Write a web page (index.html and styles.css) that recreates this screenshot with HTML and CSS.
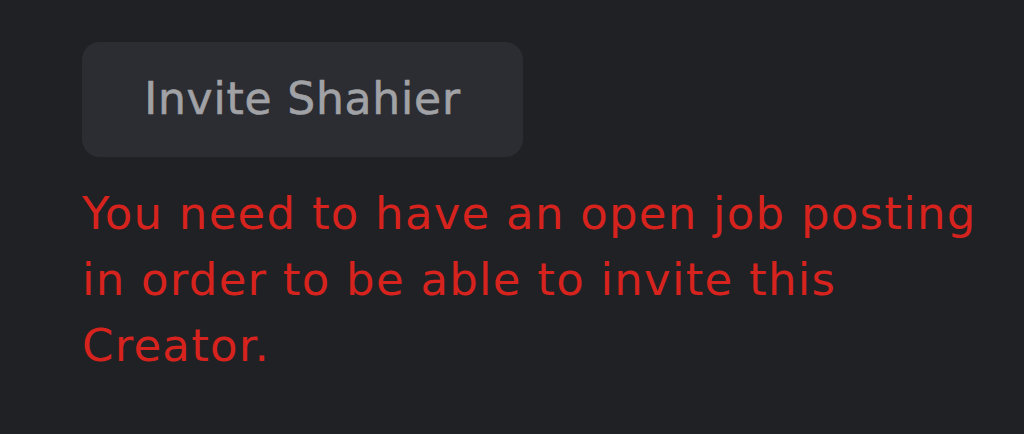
FILE: index.html
```html
<!DOCTYPE html>
<html>
<head>
<meta charset="utf-8">
<link rel="stylesheet" href="styles.css">
</head>
<body>
<div class="panel">
  <button class="invite-btn">Invite Shahier</button>
  <p class="error">You need to have an open job posting in order to be able to invite this Creator.</p>
</div>
</body>
</html>
```
FILE: styles.css
```css
html, body {
  margin: 0;
  padding: 0;
  background: #202125;
  height: 100%;
}
.panel {
  padding: 42px 0 0 82px;
  display: flex;
  flex-direction: column;
  align-items: flex-start;
}
.invite-btn {
  width: 441px;
  height: 115px;
  border: none;
  border-radius: 18px;
  background: #2c2d32;
  color: #a1a2a6;
  font-family: "DejaVu Sans", sans-serif;
  font-size: 44px;
  font-weight: 500;
  letter-spacing: 0.8px;
  -webkit-text-stroke: 0.6px #a1a2a6;
  display: flex;
  align-items: center;
  justify-content: center;
  padding: 0 0 2px 0;
}
.error {
  margin: 24px 0 0 0;
  width: 910px;
  color: #d6231e;
  font-family: "DejaVu Sans", sans-serif;
  font-size: 45px;
  line-height: 66px;
  letter-spacing: 1.25px;
}
```
